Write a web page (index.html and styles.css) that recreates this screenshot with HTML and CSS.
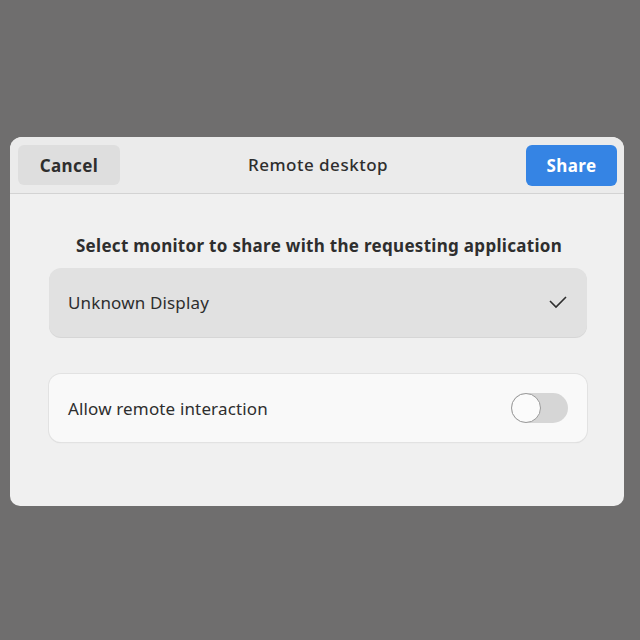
FILE: index.html
```html
<!DOCTYPE html>
<html>
<head>
<meta charset="utf-8">
<link rel="stylesheet" href="styles.css">
</head>
<body>
<div class="dialog">
  <div class="header">
    <button class="btn cancel">Cancel</button>
    <div class="title">Remote desktop</div>
    <button class="btn share">Share</button>
  </div>
  <div class="content">
    <div class="heading">Select monitor to share with the requesting application</div>
    <div class="row selected">
      <span class="label">Unknown Display</span>
      <svg class="check" width="20" height="16" viewBox="0 0 20 16"><path d="M2 6 L8 12 L18 2" fill="none" stroke="#2e2e2e" stroke-width="1.6"/></svg>
    </div>
    <div class="row card">
      <span class="label">Allow remote interaction</span>
      <div class="switch"><div class="knob"></div></div>
    </div>
  </div>
</div>
</body>
</html>
```
FILE: styles.css
```css
html, body {
  margin: 0;
  padding: 0;
  background: #6f6e6e;
  width: 640px;
  height: 640px;
  overflow: hidden;
}
body {
  padding: 137px 0 0 10px;
  box-sizing: border-box;
  font-family: "Noto Sans", "Open Sans", sans-serif;
  color: #2e2e2e;
}
.dialog {
  width: 614px;
  height: 369px;
  background: #f0f0f0;
  border-radius: 12px 12px 10px 10px;
  overflow: hidden;
  display: flex;
  flex-direction: column;
}
.header {
  height: 57px;
  box-sizing: border-box;
  background: #ebebeb;
  border-bottom: 1px solid #d3d3d3;
  display: flex;
  align-items: flex-start;
  justify-content: space-between;
  padding: 8px 7px 0 8px;
}
.btn {
  border: none;
  font-family: inherit;
  font-size: 17px;
  font-weight: 700;
  letter-spacing: 0.4px;
  border-radius: 6px;
  height: 40px;
  padding: 0;
}
.cancel {
  width: 102px;
  background: #dedede;
  color: #2e2e2e;
}
.share {
  width: 91px;
  height: 41px;
  background: #3584e4;
  color: #ffffff;
}
.title {
  font-size: 17px;
  font-weight: 500;
  letter-spacing: 0.5px;
  line-height: 40px;
  margin-right: 10px;
}
.content {
  padding: 40px 37px 0 39px;
  display: flex;
  flex-direction: column;
}
.heading {
  font-size: 17px;
  font-weight: 700;
  letter-spacing: 0.3px;
  text-align: center;
  line-height: 24px;
  margin-bottom: 10px;
  margin-left: 2px;
}
.row {
  display: flex;
  align-items: center;
  justify-content: space-between;
  border-radius: 12px;
  padding: 0 19px 0 19px;
  box-sizing: border-box;
}
.label {
  font-size: 17px;
  letter-spacing: 0.15px;
}
.selected {
  height: 69px;
  background: #e1e1e1;
  box-shadow: 0 1px 0 #d6d6d6;
}
.card {
  height: 68px;
  margin-top: 37px;
  background: #f9f9f9;
  box-shadow: 0 0 0 1px #e2e2e2, 0 1px 1px #d0d0d0;
}
.switch {
  width: 57px;
  height: 30px;
  border-radius: 15px;
  background: #d6d6d6;
  position: relative;
}
.knob {
  position: absolute;
  left: 0;
  top: 0;
  width: 28px;
  height: 28px;
  border-radius: 50%;
  background: #fbfbfb;
  border: 1px solid #9a9a9a;
}
```
